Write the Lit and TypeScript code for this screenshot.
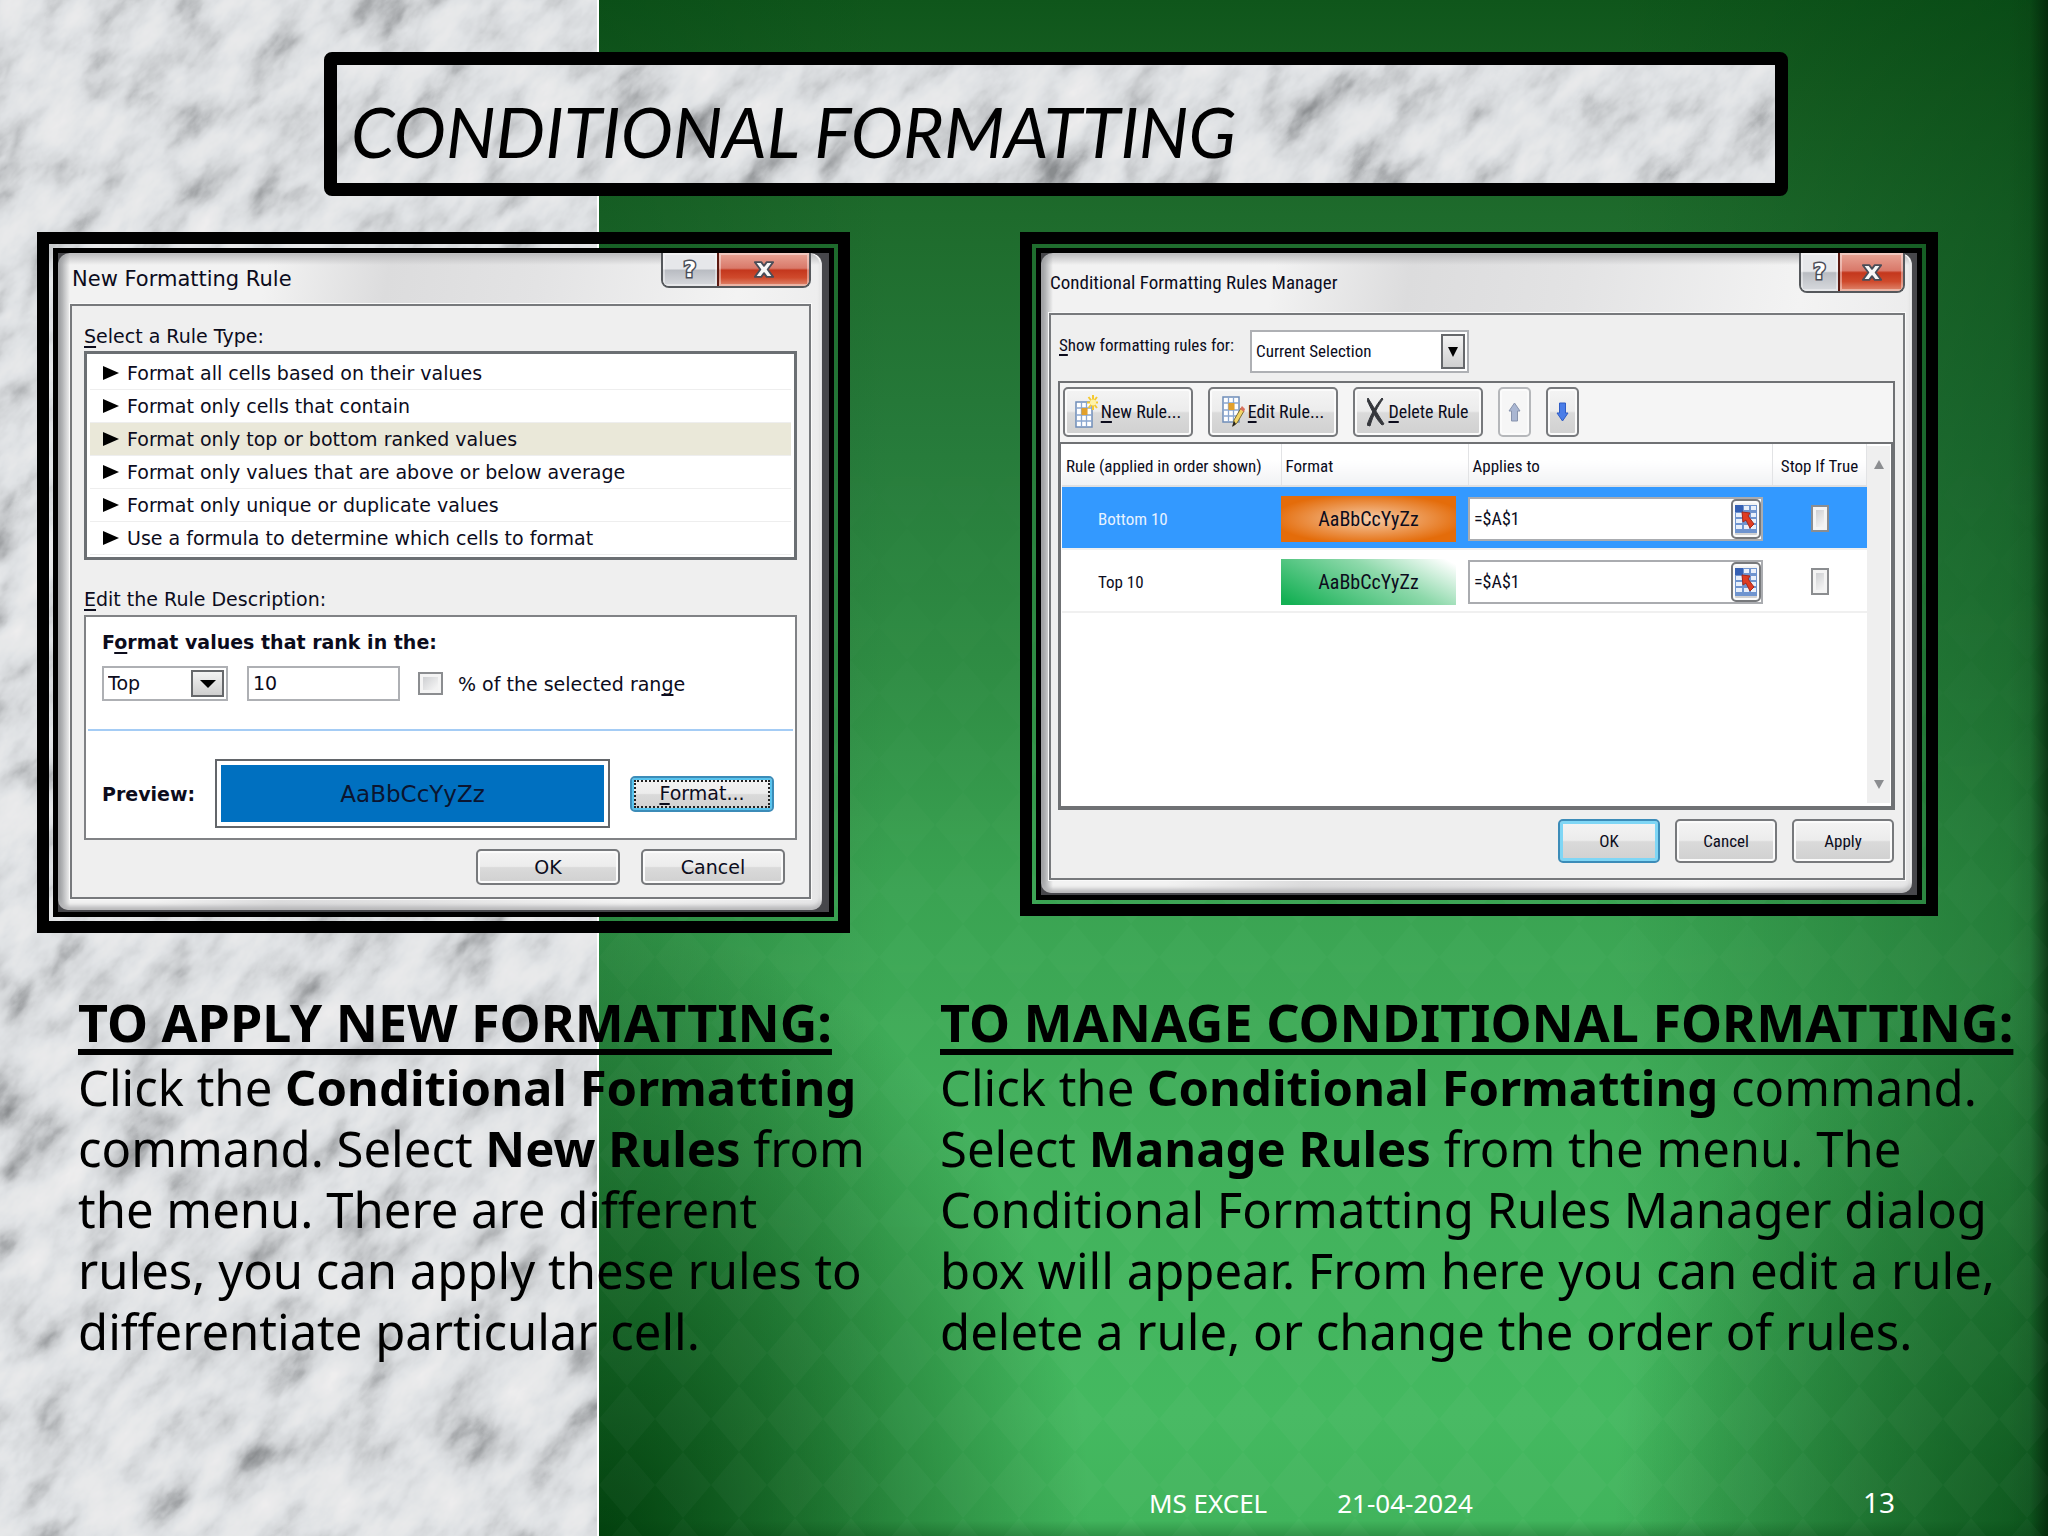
import { LitElement, html, css, svg } from "lit";
import { customElement, property } from "lit/decorators.js";

/* Veined stone surface, used behind the left side of the slide and in the title box. */
@customElement("marble-surface")
class MarbleSurface extends LitElement {
  @property({ type: Number }) seed = 4;

  static styles = css`
    :host {
      display: block;
      overflow: hidden;
      background: #e2e4e6;
    }
    svg {
      display: block;
      width: 100%;
      height: 100%;
    }
  `;

  render() {
    return html`<svg aria-hidden="true" preserveAspectRatio="xMinYMin slice">
      <defs>
        <filter id="stone" x="0" y="0" width="100%" height="100%" color-interpolation-filters="sRGB">
          <feTurbulence type="fractalNoise" baseFrequency="0.014 0.027" numOctaves="5" seed=${this.seed} />
          <feColorMatrix
            values="1.1 0.5 0 0 -0.28
                    1.1 0.5 0 0 -0.28
                    1.1 0.5 0 0 -0.28
                    0 0 0 0 1"
          />
          <feComponentTransfer>
            <feFuncR type="table" tableValues="0.54 0.66 0.77 0.84 0.88 0.905 0.92 0.945" />
            <feFuncG type="table" tableValues="0.55 0.67 0.78 0.85 0.89 0.91 0.92 0.94" />
            <feFuncB type="table" tableValues="0.56 0.68 0.79 0.86 0.9 0.915 0.925 0.94" />
          </feComponentTransfer>
        </filter>
      </defs>
      <g transform="rotate(-48)">
        <rect x="-1300" y="-100" width="2800" height="2400" filter="url(#stone)" />
      </g>
    </svg>`;
  }
}

/* Caption buttons shared by both dialogs. */
@customElement("caption-buttons")
class CaptionButtons extends LitElement {
  static styles = css`
    :host {
      display: flex;
      align-self: flex-start;
      border: 2px solid #55585c;
      border-top: 0;
      border-radius: 0 0 8px 8px;
      overflow: hidden;
      box-sizing: border-box;
    }
    button {
      display: grid;
      place-items: center;
      border: 0;
      padding: 0;
      margin: 0;
      height: 100%;
      box-shadow: inset 0 0 0 2px rgba(255, 255, 255, 0.4);
    }
    .help {
      flex: 55;
      background: linear-gradient(#e6e7ea 0 48%, #b9bcc2 52%, #d8dade);
    }
    .close {
      flex: 92;
      background: linear-gradient(#e9a596 0, #d9796a 46%, #c4371d 52%, #cf4a2c 75%, #e08a72);
      border-left: 2px solid #5c1a12;
    }
    .mark {
      font: bold 22px/28px "DejaVu Sans", sans-serif;
      color: #fff;
      -webkit-text-stroke: 3px #4a4d58;
      paint-order: stroke fill;
    }
    svg {
      width: 22px;
      height: 19px;
    }
  `;

  render() {
    return html`
      <button class="help" aria-label="Help"><span class="mark">?</span></button>
      <button class="close" aria-label="Close">
        <svg viewBox="0 0 24 20">
          <path
            d="M2 2H9L12 6L15 2H22L16 10L22 18H15L12 14L9 18H2L8 10Z"
            fill="#f7f7f7"
            stroke="#4a4d58"
            stroke-width="2"
            stroke-linejoin="round"
          />
        </svg>
      </button>
    `;
  }
}

const controls = css`
  * {
    box-sizing: border-box;
  }
  u {
    text-decoration-thickness: 2px;
    text-underline-offset: 3px;
    text-decoration-skip-ink: none;
  }
  .frame {
    border: 12px solid #000;
    padding: 4px;
  }
  .shot {
    border: 5px solid #000;
    background: #47474b;
    padding: 0 7px 2px 0;
  }
  .window {
    border-radius: 12px 12px 10px 10px;
    background:
      linear-gradient(90deg, #8f9194 0, rgba(225, 225, 225, 0) 12px),
      linear-gradient(#b9b9bb 0, rgba(225, 225, 225, 0) 12px),
      linear-gradient(100deg, #f2f2f2 0 24%, #dcdcdd 38%, #e3e3e4 55%, #f3f3f3 78%, #e6e6e7);
    box-shadow: inset 0 -4px 4px #b7b7b9, inset -2px 0 1px #fff;
    color: #0c0c1c;
  }
  .bar {
    display: flex;
    justify-content: space-between;
    align-items: center;
  }
  h2 {
    margin: 0;
    font-weight: 400;
  }
  .client {
    border: 2px solid #77797c;
    background: #efefef;
    box-shadow: 0 0 0 1px #fafafa;
    display: flex;
    flex-direction: column;
  }
  .push {
    border: 2px solid #77797c;
    border-radius: 5px;
    background: linear-gradient(#f4f4f4 0, #ececec 48%, #dadada 52%, #d0d0d0);
    box-shadow: inset 0 0 0 2px #fbfbfb;
    font: inherit;
    color: inherit;
    padding: 0;
  }
  .buttons {
    display: flex;
    justify-content: flex-end;
  }
  .combo {
    position: relative;
    display: flex;
  }
  select,
  input[type="text"] {
    appearance: none;
    border: 2px solid #aeb0b4;
    border-radius: 0;
    background: #fff;
    font: inherit;
    color: inherit;
    margin: 0;
    min-width: 0;
  }
  select {
    width: 100%;
  }
  .drop {
    position: absolute;
    top: 4px;
    bottom: 4px;
    right: 4px;
    display: grid;
    place-items: center;
    border: 2px solid #66686b;
    background: linear-gradient(#f3f3f3, #cfcfcf);
    pointer-events: none;
  }
  input[type="checkbox"] {
    appearance: none;
    margin: 0;
    border: 2px solid #8b8d90;
    background: linear-gradient(135deg, #c4c6ca, #f2f2f2 75%);
    box-shadow: inset 0 0 0 3px #f4f4f4;
  }
`;

@customElement("new-rule-dialog")
class NewRuleDialog extends LitElement {
  private ruleTypes = [
    "Format all cells based on their values",
    "Format only cells that contain",
    "Format only top or bottom ranked values",
    "Format only values that are above or below average",
    "Format only unique or duplicate values",
    "Use a formula to determine which cells to format",
  ];

  static styles = [
    controls,
    css`
      :host {
        display: block;
      }
      .window {
        font: 19px/24px "DejaVu Sans", sans-serif;
        padding: 0 11px 11px 12px;
      }
      .bar {
        height: 51px;
      }
      h2 {
        font-size: 21px;
        padding-left: 2px;
      }
      caption-buttons {
        width: 150px;
        height: 35px;
      }
      .client {
        padding: 18px 12px 12px;
      }
      .rules {
        list-style: none;
        margin: 3px 0 0;
        padding: 3px 3px 2px;
        border: 3px solid #6b6f73;
        background: #fff;
      }
      .rules li {
        height: 33px;
        display: flex;
        align-items: center;
        gap: 8px;
        padding-left: 13px;
        border-bottom: 1px solid #eee;
        white-space: nowrap;
      }
      .rules .picked {
        background: #eae8d9;
      }
      .rules svg {
        width: 16px;
        height: 14px;
      }
      .caption {
        margin-top: 27px;
      }
      .group {
        margin-top: 4px;
        border: 2px solid #808285;
        background: #fff;
        padding: 13px 2px 10px;
      }
      .group > div {
        padding: 0 19px 0 14px;
      }
      .strong {
        font-weight: 700;
      }
      .fields {
        display: flex;
        align-items: center;
        margin-top: 12px;
      }
      .combo {
        width: 126px;
        margin-right: 19px;
      }
      .fields select,
      .fields input[type="text"] {
        height: 35px;
        padding: 0 6px 2px 4px;
      }
      .fields input[type="text"] {
        width: 153px;
        margin-right: 18px;
      }
      .drop {
        width: 33px;
      }
      .fields input[type="checkbox"] {
        width: 25px;
        height: 23px;
        margin-right: 15px;
      }
      hr {
        margin: 28px 0;
        border: 0;
        border-top: 2px solid #a4ccf5;
      }
      .preview {
        display: flex;
        align-items: center;
        gap: 20px;
      }
      .preview .sample {
        flex: 1;
        height: 69px;
        border: 2px solid #63666a;
        padding: 4px;
        display: flex;
      }
      .sample span {
        flex: 1;
        display: grid;
        place-items: center;
        background: #0070c0;
        color: #0b1530;
        font-size: 23px;
      }
      .preview .push {
        width: 144px;
        height: 36px;
        border-color: #3c8cb8;
        box-shadow: inset 0 0 0 2px #58c4ee;
        padding: 2px;
      }
      .push .focus {
        display: block;
        height: 28px;
        line-height: 26px;
        outline: 2px dotted #222;
        outline-offset: -2px;
      }
      .buttons {
        gap: 21px;
        margin-top: 9px;
        padding-right: 12px;
      }
      .buttons .push {
        width: 144px;
        height: 36px;
      }
    `,
  ];

  render() {
    return html`<div class="frame"><div class="shot"><section class="window">
      <div class="bar"><h2>New Formatting Rule</h2><caption-buttons></caption-buttons></div>
      <div class="client">
        <div id="types"><u>S</u>elect a Rule Type:</div>
        <ul class="rules" aria-labelledby="types">
          ${this.ruleTypes.map(
            (t, i) => html`<li class=${i === 2 ? "picked" : ""}>
              <svg viewBox="0 0 16 14" aria-hidden="true"><path d="M0 0L16 7L0 14Z" /></svg>${t}
            </li>`
          )}
        </ul>
        <div class="caption"><u>E</u>dit the Rule Description:</div>
        <div class="group">
          <div class="strong">F<u>o</u>rmat values that rank in the:</div>
          <div class="fields">
            <span class="combo">
              <select aria-label="Rank direction"><option>Top</option><option>Bottom</option></select>
              <span class="drop"><svg width="16" height="8" viewBox="0 0 16 8"><path d="M0 0H16L8 8Z" /></svg></span>
            </span>
            <input type="text" aria-label="Rank" value="10" />
            <input type="checkbox" id="pct" />
            <label for="pct">% of the selected ran<u>g</u>e</label>
          </div>
          <hr />
          <div class="preview">
            <span class="strong">Preview:</span>
            <span class="sample"><span>AaBbCcYyZz</span></span>
            <button class="push"><span class="focus"><u>F</u>ormat...</span></button>
          </div>
        </div>
        <div class="buttons"><button class="push">OK</button><button class="push">Cancel</button></div>
      </div>
    </section></div></div>`;
  }
}

const sheet = svg`
  <rect x="1" y="7" width="16" height="25" fill="#fff" stroke="#6f8db8" stroke-width="1.5" />
  <path d="M6.500 7V32M11.500 7V32M1 13H17M1 20H17M1 26H17" stroke="#8aa6cf" stroke-width="1.300" />
  <rect x="6.500" y="13" width="6" height="7" fill="#e2a02c" />`;

@customElement("rules-manager-dialog")
class RulesManagerDialog extends LitElement {
  private rules = [
    { name: "Bottom 10", swatch: "orange", range: "=$A$1", picked: true },
    { name: "Top 10", swatch: "green", range: "=$A$1", picked: false },
  ];

  static styles = [
    controls,
    css`
      :host {
        display: block;
      }
      .window {
        font: 17px/24px "Roboto Condensed", "Liberation Sans", sans-serif;
        padding: 0 7px 13px 8px;
      }
      .shot {
        padding-right: 5px;
      }
      .bar {
        height: 60px;
      }
      h2 {
        font-size: 19px;
        padding-left: 1px;
      }
      caption-buttons {
        width: 106px;
        height: 40px;
      }
      .client {
        padding: 15px 8px 15px 7px;
      }
      .scope {
        display: flex;
        align-items: flex-start;
        gap: 16px;
        padding-left: 1px;
      }
      .scope label {
        line-height: 30px;
      }
      .combo {
        width: 219px;
      }
      .combo select {
        height: 43px;
        padding: 0 4px 2px;
      }
      .drop {
        width: 24px;
      }
      .panel {
        margin-top: 8px;
        border: 2px solid #6f7174;
        background: #f5f5f5;
      }
      .tools {
        display: flex;
        gap: 15px;
        padding: 4px 2px 5px 3px;
      }
      .tools .push {
        width: 130px;
        height: 50px;
        display: flex;
        align-items: center;
        justify-content: center;
        gap: 3px;
        font-size: 18px;
      }
      .tools .arrow {
        width: 33px;
      }
      .tools .off {
        border-color: #b5b7ba;
        background: #f6f6f6;
      }
      .list {
        display: flex;
        height: 366px;
        border: 2px solid #6f7174;
        border-left-width: 1px;
        background: #fff;
      }
      table {
        flex: 1;
        align-self: flex-start;
        border-collapse: collapse;
        table-layout: fixed;
        margin-left: 1px;
      }
      th {
        height: 42px;
        padding: 2px 4px 0;
        font-weight: 400;
        text-align: left;
        background: linear-gradient(#fff 40%, #f1f2f4);
        border-right: 1px solid #e2e3e5;
        border-bottom: 2px solid #dfe0e2;
        white-space: nowrap;
      }
      th:last-child {
        text-align: center;
        padding: 2px 0 0;
      }
      td {
        height: 63px;
        padding: 2px 0 0;
        border-bottom: 2px solid #f0f0f0;
      }
      .c-rule {
        width: 219px;
      }
      .c-format {
        width: 187px;
      }
      .c-stop {
        width: 94px;
      }
      .name {
        padding-left: 36px;
      }
      .picked td {
        background: #3399ff;
      }
      .picked .name {
        color: #e6f2ff;
      }
      .swatch {
        margin-right: 12px;
        height: 46px;
        display: grid;
        place-items: center;
        font-size: 20px;
      }
      .orange {
        background: radial-gradient(farthest-side at 50% 50%, rgba(248, 214, 186, 0.9), rgba(228, 108, 10, 0) 110%),
          #e46c0a;
      }
      .green {
        background: linear-gradient(28deg, #14b054 5%, #8ed9ab 60%, #fff 96%);
      }
      .ref {
        display: flex;
        margin-right: 10px;
        height: 44px;
        border: 2px solid #aaacb0;
        background: #fff;
      }
      .ref input[type="text"] {
        flex: 1;
        border: 0;
        padding: 0 4px;
        color: #0c0c1c;
        font-size: 18px;
      }
      .ref .push {
        width: 30px;
        display: grid;
        place-items: center;
      }
      .stop {
        text-align: center;
      }
      .stop input[type="checkbox"] {
        width: 18px;
        height: 27px;
        vertical-align: middle;
      }
      .scroll {
        width: 23px;
        margin: 2px 1px 3px 0;
        background: #efefef;
        display: flex;
        flex-direction: column;
        justify-content: space-between;
        align-items: center;
        padding: 14px 0 13px;
      }
      .buttons {
        gap: 15px;
        margin-top: 9px;
        padding-right: 1px;
      }
      .buttons .push {
        width: 102px;
        height: 44px;
      }
      .buttons .main {
        border-color: #3c8cb8;
        box-shadow: inset 0 0 0 3px #7fd6f5;
      }
    `,
  ];

  render() {
    return html`<div class="frame"><div class="shot"><section class="window">
      <div class="bar"><h2>Conditional Formatting Rules Manager</h2><caption-buttons></caption-buttons></div>
      <div class="client">
        <div class="scope">
          <label for="scope"><u>S</u>how formatting rules for:</label>
          <span class="combo">
            <select id="scope"><option>Current Selection</option></select>
            <span class="drop"><svg width="10" height="10" viewBox="0 0 10 10"><path d="M0 0H10L5 10Z" /></svg></span>
          </span>
        </div>
        <div class="panel">
          <div class="tools">
            <button class="push">
              <svg width="23" height="34" viewBox="0 0 23 34">${sheet}
                <path d="M18 0V15M12 7.500H24M13.500 2L22 13M22 2L13.500 13" stroke="#f4c932" stroke-width="2" />
                <circle cx="18" cy="7.500" r="3" fill="#fff3a8" />
              </svg>
              <span><u>N</u>ew Rule...</span>
            </button>
            <button class="push">
              <svg width="23" height="34" viewBox="0 0 23 34">
                <g transform="translate(0 -5)">${sheet}</g>
                <path d="M11 31L12 25L19 13L22 16L15 28Z" fill="#f3d566" stroke="#7a6a35" />
                <path d="M18 14L20 11L23 14L22 17Z" fill="#d9705c" />
                <path d="M10 32L12 26L14 29Z" fill="#222" />
              </svg>
              <span><u>E</u>dit Rule...</span>
            </button>
            <button class="push">
              <svg width="18" height="30" viewBox="0 0 18 30">
                <path d="M1 1C6 9 11 18 17 27L15 28C9 22 4 12 0 3ZM16 2C11 9 6 18 3 29L0 28C4 17 9 8 15 1Z" fill="#35373c" stroke="#35373c" />
              </svg>
              <span><u>D</u>elete Rule</span>
            </button>
            <button class="push arrow off" aria-label="Move up" disabled>
              <svg width="13" height="20" viewBox="0 0 13 20"><path d="M6.500 1L12 9H9.500V19H3.500V9H1Z" fill="#a9b6d2" stroke="#8793ad" /></svg>
            </button>
            <button class="push arrow" aria-label="Move down">
              <svg width="13" height="20" viewBox="0 0 13 20"><path d="M6.500 19L12 11H9.500V1H3.500V11H1Z" fill="#4a7de8" stroke="#2f5cc4" /></svg>
            </button>
          </div>
          <div class="list">
            <table>
              <thead>
                <tr>
                  <th class="c-rule">Rule (applied in order shown)</th>
                  <th class="c-format">Format</th>
                  <th>Applies to</th>
                  <th class="c-stop">Stop If True</th>
                </tr>
              </thead>
              <tbody>
                ${this.rules.map(
                  (r) => html`<tr class=${r.picked ? "picked" : ""}>
                    <td class="name">${r.name}</td>
                    <td><div class="swatch ${r.swatch}">AaBbCcYyZz</div></td>
                    <td>
                      <div class="ref">
                        <input type="text" aria-label="Applies to" .value=${r.range} />
                        <button class="push" aria-label="Select range">
                          <svg width="22" height="30" viewBox="0 0 22 30">
                            <rect x="0" y="1" width="22" height="28" fill="#6f94cf" />
                            <rect x="0" y="1" width="8" height="7" fill="#3560b4" />
                            <path d="M9 2H14V6H9ZM16 2H21V6H16ZM1 9H7V13H1ZM16 9H21V13H16ZM1 15H7V19H1ZM16 15H21V19H16ZM1 21H7V25H1ZM9 21H14V25H9ZM16 21H21V25H16Z" fill="#e8effa" />
                            <path d="M7 8L15 9L13 12L19 20L15 24L11 16L8 18Z" fill="#e03c22" stroke="#a5281a" />
                          </svg>
                        </button>
                      </div>
                    </td>
                    <td class="stop"><input type="checkbox" aria-label="Stop If True" /></td>
                  </tr>`
                )}
              </tbody>
            </table>
            <div class="scroll" aria-hidden="true">
              <svg width="10" height="10" viewBox="0 0 10 10"><path d="M5 0L10 9H0Z" fill="#8b8d90" /></svg>
              <svg width="10" height="10" viewBox="0 0 10 10"><path d="M5 9L10 0H0Z" fill="#8b8d90" /></svg>
            </div>
          </div>
        </div>
        <div class="buttons">
          <button class="push main">OK</button><button class="push">Cancel</button><button class="push">Apply</button>
        </div>
      </div>
    </section></div></div>`;
  }
}

@customElement("app-root")
class AppRoot extends LitElement {
  static styles = css`
    :host {
      display: grid;
      min-height: 100vh;
      overflow: hidden;
      font-family: "Noto Sans", "Open Sans", sans-serif;
      color: #000;
    }
    * {
      box-sizing: border-box;
    }
    .backdrop,
    .slide {
      grid-area: 1 / 1;
      min-width: 0;
    }
    .backdrop {
      display: grid;
      grid-template-columns: 599fr 1449fr;
    }
    .backdrop marble-surface {
      border-right: 2px solid #fff;
    }
    .green {
      background:
        linear-gradient(270deg, rgba(0, 25, 5, 0.65) 0, rgba(0, 40, 10, 0.12) 18px, rgba(0, 50, 10, 0) 40px),
        linear-gradient(90deg, rgba(0, 60, 15, 0.28) 0, rgba(0, 60, 15, 0) 20%),
        linear-gradient(270deg, rgba(0, 60, 15, 0.42) 0, rgba(0, 60, 15, 0) 30%),
        radial-gradient(ellipse 34% 40% at 0 100%, rgba(0, 62, 10, 0.95), rgba(0, 62, 10, 0)),
        radial-gradient(ellipse 30% 36% at 100% 100%, rgba(0, 62, 10, 0.65), rgba(0, 62, 10, 0)),
        linear-gradient(#0f561b 0, #175f22 6%, #1e6b2c 14%, #267a3a 28%, #2f8d44 44%, #3aa352 58%, #41b05b 74%, #44b960 92%, #41b45c 99%, #2f9246);
    }
    .green svg {
      display: block;
      width: 100%;
      height: 100%;
    }
    .slide {
      display: flex;
      flex-direction: column;
      padding-top: 52px;
    }
    header {
      display: grid;
      margin: 0 260px 36px 324px;
      border: 13px solid #000;
      border-radius: 8px;
      background: #000;
      height: 144px;
    }
    header > * {
      grid-area: 1 / 1;
      min-height: 0;
    }
    h1 {
      position: relative;
      margin: 0;
      padding: 12px 14px 0;
      font: italic 400 70px/108px Lato, sans-serif;
      white-space: nowrap;
    }
    .dialogs {
      display: grid;
      grid-template-columns: 813fr 918fr;
      column-gap: 170px;
      align-items: start;
      padding: 0 110px 0 37px;
    }
    .notes {
      display: grid;
      grid-template-columns: 862fr 1108fr;
      padding: 57px 0 0 78px;
      white-space: nowrap;
    }
    h2 {
      margin: 0 0 3px;
      font-size: 52px;
      line-height: 64px;
      text-decoration: underline 6px;
      text-underline-offset: 7px;
      text-decoration-skip-ink: none;
    }
    p {
      margin: 0;
      font-size: 49px;
      line-height: 61px;
    }
    footer {
      display: flex;
      justify-content: flex-end;
      align-items: baseline;
      margin-top: auto;
      padding: 0 153px 17px 0;
      color: #fff;
      font-size: 26px;
      line-height: 32px;
    }
    footer time {
      margin: 0 390px 0 70px;
    }
    .number {
      font-size: 28px;
    }
  `;

  render() {
    return html`
      <div class="backdrop">
        <marble-surface .seed=${4}></marble-surface>
        <div class="green">
          <svg aria-hidden="true">
            <defs>
              <pattern id="diamonds" width="56" height="66" patternUnits="userSpaceOnUse">
                <path d="M28 0L56 33L28 66L0 33Z" fill="#fff" />
              </pattern>
              <linearGradient id="rise" x1="0" y1="0" x2="0" y2="1">
                <stop offset="0.3" stop-color="#fff" stop-opacity="0.15" />
                <stop offset="0.8" stop-color="#fff" />
              </linearGradient>
              <mask id="fade"><rect width="100%" height="100%" fill="url(#rise)" /></mask>
            </defs>
            <rect width="100%" height="100%" fill="url(#diamonds)" opacity="0.025" mask="url(#fade)" />
          </svg>
        </div>
      </div>
      <main class="slide">
        <header>
          <marble-surface .seed=${11}></marble-surface>
          <h1>CONDITIONAL FORMATTING</h1>
        </header>
        <div class="dialogs">
          <new-rule-dialog></new-rule-dialog>
          <rules-manager-dialog></rules-manager-dialog>
        </div>
        <div class="notes">
          <section>
            <h2>TO APPLY NEW FORMATTING:</h2>
            <p>
              Click the <b>Conditional Formatting</b><br />command. Select <b>New Rules</b> from<br />the menu. There are
              different<br />rules, you can apply these rules to<br />differentiate particular cell.
            </p>
          </section>
          <section>
            <h2>TO MANAGE CONDITIONAL FORMATTING:</h2>
            <p>
              Click the <b>Conditional Formatting</b> command.<br />Select <b>Manage Rules</b> from the menu. The<br />Conditional
              Formatting Rules Manager dialog<br />box will appear. From here you can edit a rule,<br />delete a rule, or
              change the order of rules.
            </p>
          </section>
        </div>
        <footer><span>MS EXCEL</span><time datetime="2024-04-21">21-04-2024</time><span class="number">13</span></footer>
      </main>
    `;
  }
}
